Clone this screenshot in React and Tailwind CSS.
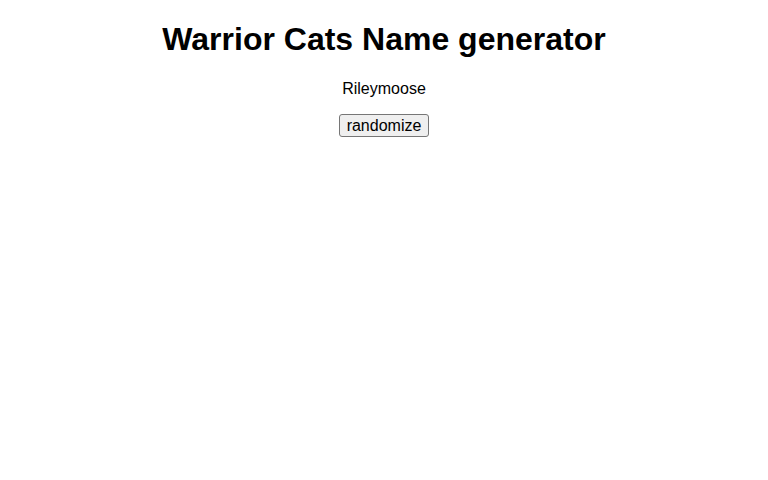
import { useState } from "react";

const prefixes = ["Riley", "Fire", "Sand", "Bramble", "Leaf", "Jay", "Holly", "Storm"];
const suffixes = ["moose", "star", "storm", "claw", "pool", "feather", "heart", "tail"];

const pick = (list) => list[Math.floor(Math.random() * list.length)];

export default function App() {
  const [name, setName] = useState("Rileymoose");

  return (
    <div className="min-h-[480px] bg-white text-black text-center font-['Liberation_Sans',Arial,sans-serif]">
      <h1 className="text-[32px] leading-[37px] font-bold pt-[21px] mb-[22px]">Warrior Cats Name generator</h1>
      <p className="text-base leading-[18px] my-4">{name}</p>
      <p className="leading-[18px] my-4">
        <button
          onClick={() => setName(pick(prefixes) + pick(suffixes))}
          className="text-base leading-[19px] px-[7px] py-px bg-[#efefef] border border-[#767676] rounded-[3px] hover:bg-[#e5e5e5] cursor-default"
        >
          randomize
        </button>
      </p>
    </div>
  );
}
